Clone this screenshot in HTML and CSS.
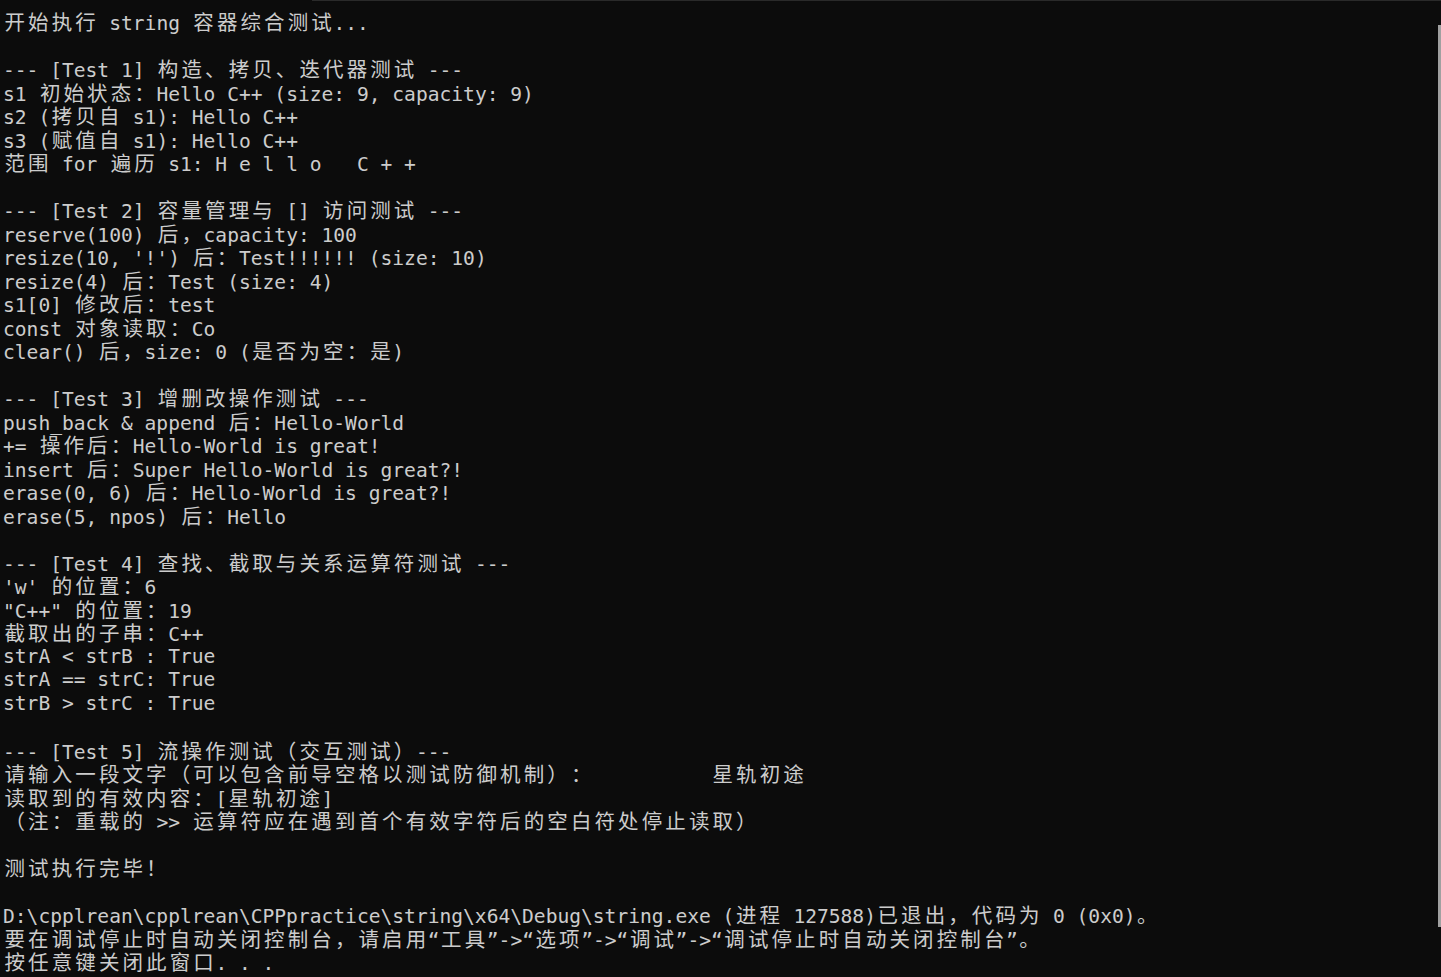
FILE: index.html
```html
<!DOCTYPE html>
<html lang="zh-CN">
<head>
<meta charset="utf-8">
<title>Microsoft Visual Studio 调试控制台</title>
<link rel="stylesheet" href="styles.css">
</head>
<body>
<div class="top"><div class="top-gap"></div><div class="top-line"></div></div>
<div class="win">
<div class="con">
<div class="ln"><span class="z">开始执行</span> string <span class="z">容器综合测试</span>...</div>
<div class="ln"></div>
<div class="ln">--- [Test 1] <span class="z">构造、拷贝、迭代器测试</span> ---</div>
<div class="ln">s1 <span class="z">初始状态：</span>Hello C++ (size: 9, capacity: 9)</div>
<div class="ln">s2 (<span class="z">拷贝自</span> s1): Hello C++</div>
<div class="ln">s3 (<span class="z">赋值自</span> s1): Hello C++</div>
<div class="ln"><span class="z">范围</span> for <span class="z">遍历</span> s1: H e l l o   C + + </div>
<div class="ln"></div>
<div class="ln">--- [Test 2] <span class="z">容量管理与</span> [] <span class="z">访问测试</span> ---</div>
<div class="ln">reserve(100) <span class="z">后，</span>capacity: 100</div>
<div class="ln">resize(10, '!') <span class="z">后：</span>Test!!!!!! (size: 10)</div>
<div class="ln">resize(4) <span class="z">后：</span>Test (size: 4)</div>
<div class="ln">s1[0] <span class="z">修改后：</span>test</div>
<div class="ln">const <span class="z">对象读取：</span>Co</div>
<div class="ln">clear() <span class="z">后，</span>size: 0 (<span class="z">是否为空：是</span>)</div>
<div class="ln"></div>
<div class="ln">--- [Test 3] <span class="z">增删改操作测试</span> ---</div>
<div class="ln">push_back &amp; append <span class="z">后：</span>Hello-World</div>
<div class="ln">+= <span class="z">操作后：</span>Hello-World is great!</div>
<div class="ln">insert <span class="z">后：</span>Super Hello-World is great?!</div>
<div class="ln">erase(0, 6) <span class="z">后：</span>Hello-World is great?!</div>
<div class="ln">erase(5, npos) <span class="z">后：</span>Hello</div>
<div class="ln"></div>
<div class="ln">--- [Test 4] <span class="z">查找、截取与关系运算符测试</span> ---</div>
<div class="ln">'w' <span class="z">的位置：</span>6</div>
<div class="ln">"C++" <span class="z">的位置：</span>19</div>
<div class="ln"><span class="z">截取出的子串：</span>C++</div>
<div class="ln">strA &lt; strB : True</div>
<div class="ln">strA == strC: True</div>
<div class="ln">strB &gt; strC : True</div>
<div class="ln"></div>
<div class="ln">--- [Test 5] <span class="z">流操作测试（交互测试）</span>---</div>
<div class="ln"><span class="z">请输入一段文字（可以包含前导空格以测试防御机制）：</span>          <span class="z">星轨初途</span></div>
<div class="ln"><span class="z">读取到的有效内容：</span>[<span class="z">星轨初途</span>]</div>
<div class="ln"><span class="z">（注：重载的</span> &gt;&gt; <span class="z">运算符应在遇到首个有效字符后的空白符处停止读取）</span></div>
<div class="ln"></div>
<div class="ln"><span class="z">测试执行完毕！</span></div>
<div class="ln"></div>
<div class="ln">D:\cpplrean\cpplrean\CPPpractice\string\x64\Debug\string.exe (<span class="z">进程</span> 127588)<span class="z">已退出，代码为</span> 0 (0x0)<span class="z">。</span></div>
<div class="ln"><span class="z">要在调试停止时自动关闭控制台，请启用</span>“<span class="z">工具</span>”-&gt;“<span class="z">选项</span>”-&gt;“<span class="z">调试</span>”-&gt;“<span class="z">调试停止时自动关闭控制台</span>”<span class="z">。</span></div>
<div class="ln"><span class="z">按任意键关闭此窗口</span>. . .</div>
</div>
<div class="bar"><div class="thumb"></div></div>
</div>
</body>
</html>
```

FILE: styles.css
```css
html, body {
  margin: 0;
  height: 100%;
  background: #0c0c0c;
}

body {
  display: flex;
  flex-direction: column;
  overflow: hidden;
}

.top {
  display: flex;
  height: 1px;
  flex: none;
}

.top-gap {
  width: 312px;
}

.top-line {
  flex: 1;
  background: #2a2a2a;
}

.win {
  flex: 1;
  display: flex;
}

.con {
  flex: 1;
  padding: 9px 0 0 3px;
  font-family: "DejaVu Sans Mono", "Liberation Mono", monospace;
  font-size: 19.6px;
  color: #cccccc;
}

.ln {
  height: 23.5px;
  line-height: 23.5px;
  white-space: pre;
  text-spacing-trim: space-all;
}

.z {
  font-family: "Noto Sans CJK SC", "Noto Sans CJK JP", sans-serif;
  font-size: 20.5px;
  letter-spacing: 3.1px;
  padding-left: 1.5px;
  margin-right: -1.5px;
  text-spacing-trim: space-all;
}

.bar {
  width: 3px;
  flex: none;
}

.thumb {
  margin-top: 24px;
  height: 902px;
  background: #a0a0a0;
}
```
